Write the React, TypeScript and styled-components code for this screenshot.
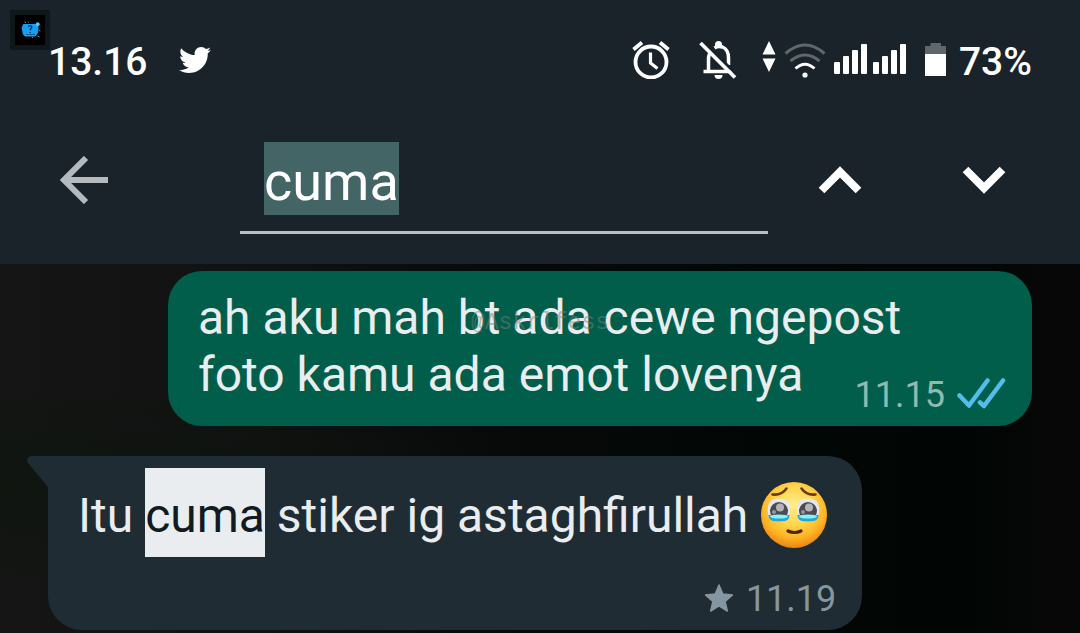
import React from "react";
import styled, { createGlobalStyle } from "styled-components";
import { FaTwitter } from "react-icons/fa";

const GlobalStyle = createGlobalStyle`
  * { box-sizing: border-box; }
  body {
    margin: 0;
    background: #050706;
    font-family: Roboto, "Liberation Sans", sans-serif;
  }
`;

const Page = styled.div`
  position: relative;
  display: flex;
  flex-direction: column;
  min-height: 100vh;
`;

const Header = styled.header`
  background: #192329;
  padding-bottom: 24px;
`;

const StatusBar = styled.div`
  display: flex;
  align-items: center;
  justify-content: space-between;
  height: 120px;
  padding: 0 48px;
  color: #fff;
`;

const StatusGroup = styled.div<{ $gap: number }>`
  display: flex;
  align-items: center;
  gap: ${(p) => p.$gap}px;
`;

const StatusText = styled.span`
  padding-top: 4px;
  font-size: 39px;
  font-weight: 500;
  line-height: 48px;
`;

const Icon = styled.svg`
  display: block;
  flex: none;
`;

const Toolbar = styled.form`
  display: flex;
  align-items: center;
  height: 120px;
  padding-right: 24px;
`;

const IconButton = styled.button<{ $width: number }>`
  display: flex;
  align-items: center;
  justify-content: center;
  flex: none;
  width: ${(p) => p.$width}px;
  height: 96px;
  padding: 0;
  border: 0;
  background: none;
  cursor: pointer;
`;

const SearchField = styled.div`
  flex: 1;
  min-width: 0;
  align-self: flex-end;
  margin: 0 0 6px 72px;
  padding: 0 24px 16px;
  border-bottom: 3px solid #b9c0c1;
`;

const SearchInput = styled.input`
  display: block;
  field-sizing: content;
  max-width: 100%;
  height: 73px;
  padding: 6px 0 0;
  border: 0;
  outline: 0;
  background: #446566;
  color: #fff;
  font: 400 54px Roboto, "Liberation Sans", sans-serif;
`;

const Chat = styled.main`
  flex: 1;
  display: flex;
  flex-direction: column;
  gap: 30px;
  padding: 7px 48px 3px;
  background:
    radial-gradient(ellipse at 8% 60%, rgba(10, 22, 12, 0.5), transparent 30%),
    linear-gradient(90deg, #141514 0%, #111211 22%, #060908 50%, #010705 75%, #010604 90%, #070707 97%);
`;

const Bubble = styled.article<{ $sent?: boolean }>`
  position: relative;
  display: flex;
  flex-direction: column;
  align-self: ${(p) => (p.$sent ? "flex-end" : "flex-start")};
  width: ${(p) => (p.$sent ? "80vw" : "auto")};
  max-width: 100%;
  padding: 18px 26px 13px 30px;
  border-radius: ${(p) => (p.$sent ? "34px" : "0 34px 34px 34px")};
  background: ${(p) => (p.$sent ? "#015e4b" : "#202c33")};
`;

const Tail = styled.svg`
  position: absolute;
  top: 0;
  left: -21px;
`;

const MessageText = styled.p`
  margin: 0;
  color: #e9edef;
  font-size: 48px;
  line-height: 57px;
`;

const MessageRow = styled.div`
  display: flex;
  align-items: center;
  gap: 12px;
  padding: 7px 8px 32px 0;
`;

const Match = styled.mark`
  padding: 19px 0 13px;
  background: #e9edef;
  color: #111b21;
`;

const Meta = styled.footer<{ $overlap?: boolean }>`
  display: flex;
  align-items: center;
  align-self: flex-end;
  gap: 12px;
  margin-top: ${(p) => (p.$overlap ? "-26px" : "0")};
  color: ${(p) => (p.$overlap ? "#8fbab0" : "#8696a0")};
  font-size: 36px;
  line-height: 36px;
`;

const Watermark = styled.div`
  position: absolute;
  top: 309px;
  left: 0;
  right: 0;
  text-align: center;
  color: rgba(120, 124, 122, 0.5);
  font: 23px/28px "Liberation Mono", monospace;
  pointer-events: none;
`;

const Badge = styled.div`
  position: absolute;
  top: 10px;
  left: 10px;
  padding: 5px;
  background: #10171b;
`;

const BadgeLogo = () => (
  <Badge>
    <Icon width="30" height="30" viewBox="0 0 30 30">
      <rect width="30" height="30" fill="#000" />
      <path d="M8.5 9h13q2.500 1.500 2 5.500-.3 5-3.500 7H10.500q-3-1-3.500-6.500-.2-5 1.500-6z" fill="#159ff0" />
      <circle cx="22.700" cy="9.300" r="2" fill="#4cc3ff" />
      <path d="M13.300 12.200q.4-1.700 2-1.500 1.900.3 1.300 2-.3.8-1.300 1.400v1.500M15.200 17v1" fill="none" stroke="#06304f" strokeWidth="1.300" />
      <path d="M11 19.500h9" stroke="#0b5d93" strokeWidth="1" />
      <path d="M9.500 7l1.500.6M13 6.500l.5 1M6 12.500l1 1M24 15.500l1.500.5M17 22l1 .8M22.500 21l2 1" stroke="#8fb7a0" strokeWidth=".8" />
    </Icon>
  </Badge>
);

const AlarmIcon = () => (
  <Icon width="38" height="38" viewBox="0 0 38 38" fill="none" stroke="#fff">
    <circle cx="19" cy="21" r="15.500" strokeWidth="3.800" />
    <path d="M18.500 11.500V22l7 5.500" strokeWidth="3.200" />
    <path d="M1.500 8.500L10 1.500M28 1.500l8.500 7" strokeWidth="3.800" />
  </Icon>
);

const BellOffIcon = () => (
  <Icon width="38" height="38" viewBox="0 0 38 38">
    <path d="M4.500 30.500h29M9.500 30V18q0-4.500 2.500-7M15.500 7q3.500-2.500 8-1 6 2.500 6 11v7" fill="none" stroke="#fff" strokeWidth="3.500" />
    <path d="M16 5V3.500a3.500 3.500 0 0 1 7 0V5z" fill="#fff" />
    <path d="M15.500 34h8a4 4 0 0 1-8 0z" fill="#fff" />
    <path d="M4 0L38 34" stroke="#192329" strokeWidth="3" />
    <path d="M1.500 2L36 36.500" stroke="#fff" strokeWidth="3.800" />
  </Icon>
);

const DataArrowsIcon = () => (
  <Icon width="14" height="38" viewBox="0 0 14 38" fill="#fff">
    <path d="M7 0l6.500 13.500h-13zM7 31l6.500-13.500h-13z" />
  </Icon>
);

const WifiIcon = () => (
  <Icon width="42" height="36" viewBox="0 0 42 36" fill="none" strokeWidth="3">
    <path d="M1.500 11.500q19.500-17 39 0" stroke="#5f676b" />
    <path d="M6.500 19q14.500-12 29 0" stroke="#5f676b" />
    <path d="M11.500 26.500q9.500-8.500 19 0" stroke="#fff" />
    <circle cx="21" cy="33" r="2.600" fill="#fff" />
  </Icon>
);

const SignalIcon = () => (
  <Icon width="34" height="34" viewBox="0 0 34 34" fill="#fff">
    <rect x="0" y="19" width="6" height="12" rx="1" />
    <rect x="9" y="13" width="6" height="18" rx="1" />
    <rect x="18" y="7" width="6" height="24" rx="1" />
    <rect x="27" y="1" width="6" height="30" rx="1" />
  </Icon>
);

const BatteryIcon = () => (
  <Icon width="22" height="34" viewBox="0 0 22 34">
    <path d="M0 3h5.500V0h10.500v3H21v9H0z" fill="#5f676b" />
    <path d="M0 11h21v22H0z" fill="#fff" />
  </Icon>
);

const BackIcon = () => (
  <Icon width="48" height="48" viewBox="0 0 48 48" fill="none" stroke="#b4babe" strokeWidth="6">
    <path d="M48 24H5M26 2L4 24l22 22" />
  </Icon>
);

const ChevronIcon = ({ down }: { down?: boolean }) => (
  <Icon width="44" height="28" viewBox="0 0 44 28" fill="none" stroke="#fff" strokeWidth="8">
    <path d={down ? "M3.500 3.500L22 22 40.500 3.500" : "M3.500 24.500L22 6l18.500 18.500"} />
  </Icon>
);

const ReadTicks = () => (
  <Icon width="49" height="36" viewBox="0 0 49 36" fill="none" stroke="#53bdeb" strokeWidth="4.500" strokeLinecap="round" strokeLinejoin="round">
    <path d="M2.500 18.500L12 28.500 30.500 3.500M23 25.500l4 3.500L46 3.500" />
  </Icon>
);

const StarIcon = () => (
  <Icon width="30" height="30" viewBox="0 0 30 30">
    <path
      d="M15 1l3.800 9 9.700.9-7.400 6.500 2.200 9.600L15 21.900 6.700 27l2.200-9.600-7.400-6.500 9.700-.9z"
      fill="#8696a0"
      stroke="#8696a0"
      strokeWidth="1.500"
      strokeLinejoin="round"
    />
  </Icon>
);

const TearyEye = ({ x }: { x: number }) => (
  <g transform={`translate(${x} 0)`}>
    <clipPath id={`eye${x}`}>
      <path d="M-10 37C-13.500 23-9 17.500 0 17.500S13.500 23 10 37Q9 40.500 0 40.500T-10 37z" />
    </clipPath>
    <g clipPath={`url(#eye${x})`}>
      <rect x="-14" y="16" width="28" height="26" fill="#e6e6ee" />
      <circle cx="0" cy="30" r="9" fill="#4b4c52" />
      <circle cx="1" cy="26.500" r="4" fill="#b4b4ba" />
      <circle cx="-5" cy="31" r="2" fill="#96979b" />
      <rect x="-14" y="34" width="28" height="9" fill="#1fa9cf" />
      <ellipse cx="0" cy="35.500" rx="9" ry="2" fill="#8cf0fa" />
    </g>
  </g>
);

const HoldingBackTears = () => (
  <Icon width="68" height="68" viewBox="0 0 68 68" role="img" aria-label="face holding back tears">
    <defs>
      <radialGradient id="face" cx="50%" cy="36%" r="64%">
        <stop offset="0" stopColor="#ffee90" />
        <stop offset="0.45" stopColor="#ffd64c" />
        <stop offset="0.75" stopColor="#fdb625" />
        <stop offset="1" stopColor="#ec8414" />
      </radialGradient>
    </defs>
    <circle cx="34" cy="34" r="33" fill="url(#face)" />
    <TearyEye x={19} />
    <TearyEye x={48} />
    <path d="M12.500 13.500q9 1 14-6M55.500 13.500q-9 1-14-6" fill="none" stroke="#6b3a0a" strokeWidth="2.600" strokeLinecap="round" />
    <path d="M28 50q6.500 3 13 0" fill="none" stroke="#4f2605" strokeWidth="3.200" strokeLinecap="round" />
  </Icon>
);

export default function App() {
  return (
    <Page>
      <GlobalStyle />
      <Header>
        <StatusBar>
          <StatusGroup $gap={31}>
            <StatusText>13.16</StatusText>
            <FaTwitter size={32} />
          </StatusGroup>
          <StatusGroup $gap={18}>
            <StatusGroup $gap={25}>
              <StatusGroup $gap={29}>
                <AlarmIcon />
                <BellOffIcon />
              </StatusGroup>
              <StatusGroup $gap={8}>
                <DataArrowsIcon />
                <WifiIcon />
                <StatusGroup $gap={5}>
                  <SignalIcon />
                  <SignalIcon />
                </StatusGroup>
              </StatusGroup>
            </StatusGroup>
            <StatusGroup $gap={12}>
              <BatteryIcon />
              <StatusText>73%</StatusText>
            </StatusGroup>
          </StatusGroup>
        </StatusBar>
        <Toolbar role="search" onSubmit={(e) => e.preventDefault()}>
          <IconButton type="button" $width={168} aria-label="Back">
            <BackIcon />
          </IconButton>
          <SearchField>
            <SearchInput type="text" defaultValue="cuma" aria-label="Search messages" />
          </SearchField>
          <IconButton type="button" $width={144} aria-label="Previous match">
            <ChevronIcon />
          </IconButton>
          <IconButton type="button" $width={144} aria-label="Next match">
            <ChevronIcon down />
          </IconButton>
        </Toolbar>
      </Header>
      <Chat>
        <Bubble $sent>
          <MessageText>
            ah aku mah bt ada cewe ngepost
            <br />
            foto kamu ada emot lovenya
          </MessageText>
          <Meta $overlap>
            <time>11.15</time>
            <ReadTicks />
          </Meta>
        </Bubble>
        <Bubble>
          <Tail width="22" height="34" viewBox="0 0 22 34">
            <path d="M22 0H5Q-2 1 1 7L21 31V34H22z" fill="#202c33" />
          </Tail>
          <MessageRow>
            <MessageText>
              Itu <Match>cuma</Match> stiker ig astaghfirullah
            </MessageText>
            <HoldingBackTears />
          </MessageRow>
          <Meta>
            <StarIcon />
            <time>11.19</time>
          </Meta>
        </Bubble>
      </Chat>
      <Watermark>@Askrlfess</Watermark>
      <BadgeLogo />
    </Page>
  );
}
